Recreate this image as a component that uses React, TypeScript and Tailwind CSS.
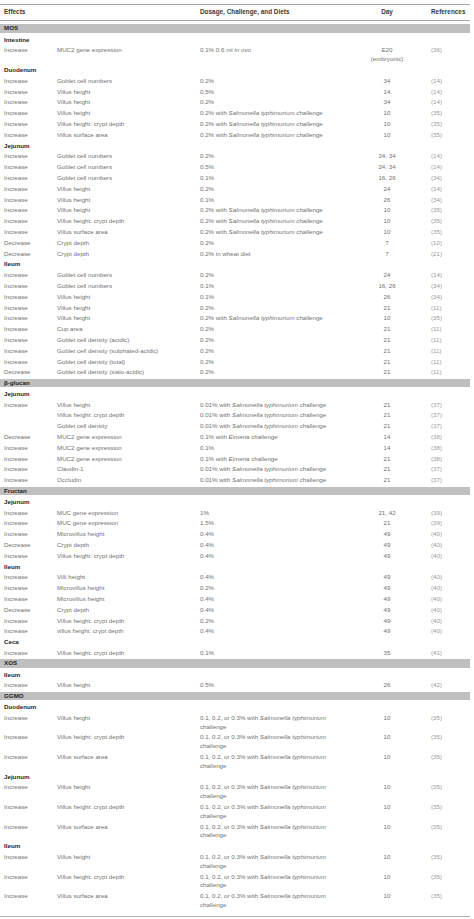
import type { ReactNode } from "react";

type Row = { e?: string; m: string; d: ReactNode; day: ReactNode; r: string; two?: boolean };
type Item = { band: string } | { label: string } | Row;

const sal = (pre: string) => (
    <>
        {pre} with <i>Salmonella typhimurium</i> challenge
    </>
);
const eim = (
    <>
        0.1% with <i>Eimeria</i> challenge
    </>
);
const gg = (
    <>
        0.1, 0.2, or 0.3% with <i>Salmonella typhimurium</i>
        <br />
        challenge
    </>
);

const ggmoRows: Row[] = [
    { e: "Increase", m: "Villus height", d: gg, day: "10", r: "(35)", two: true },
    { e: "Increase", m: "Villus height: crypt depth", d: gg, day: "10", r: "(35)", two: true },
    { e: "Increase", m: "Villus surface area", d: gg, day: "10", r: "(35)", two: true },
];

const items: Item[] = [
    { band: "MOS" },
    { label: "Intestine" },
    {
        e: "Increase",
        m: "MUC2 gene expression",
        d: (
            <>
                0.1% 0.6 ml <i>in ovo</i>
            </>
        ),
        day: (
            <>
                E20
                <br />
                (embryonic)
            </>
        ),
        r: "(36)",
        two: true,
    },
    { label: "Duodenum" },
    { e: "Increase", m: "Goblet cell numbers", d: "0.2%", day: "34", r: "(14)" },
    { e: "Increase", m: "Villus height", d: "0.5%", day: "14", r: "(14)" },
    { e: "Increase", m: "Villus height", d: "0.2%", day: "34", r: "(14)" },
    { e: "Increase", m: "Villus height", d: sal("0.2%"), day: "10", r: "(35)" },
    { e: "Increase", m: "Villus height: crypt depth", d: sal("0.2%"), day: "10", r: "(35)" },
    { e: "Increase", m: "Villus surface area", d: sal("0.2%"), day: "10", r: "(35)" },
    { label: "Jejunum" },
    { e: "Increase", m: "Goblet cell numbers", d: "0.2%", day: "24, 34", r: "(14)" },
    { e: "Increase", m: "Goblet cell numbers", d: "0.5%", day: "24, 34", r: "(14)" },
    { e: "Increase", m: "Goblet cell numbers", d: "0.1%", day: "16, 26", r: "(34)" },
    { e: "Increase", m: "Villus height", d: "0.2%", day: "24", r: "(14)" },
    { e: "Increase", m: "Villus height", d: "0.1%", day: "26", r: "(34)" },
    { e: "Increase", m: "Villus height", d: sal("0.2%"), day: "10", r: "(35)" },
    { e: "Increase", m: "Villus height: crypt depth", d: sal("0.2%"), day: "10", r: "(35)" },
    { e: "Increase", m: "Villus surface area", d: sal("0.2%"), day: "10", r: "(35)" },
    { e: "Decrease", m: "Crypt depth", d: "0.2%", day: "7", r: "(10)" },
    { e: "Decrease", m: "Crypt depth", d: "0.2% in wheat diet", day: "7", r: "(21)" },
    { label: "Ileum" },
    { e: "Increase", m: "Goblet cell numbers", d: "0.2%", day: "24", r: "(14)" },
    { e: "Increase", m: "Goblet cell numbers", d: "0.1%", day: "16, 26", r: "(34)" },
    { e: "Increase", m: "Villus height", d: "0.1%", day: "26", r: "(34)" },
    { e: "Increase", m: "Villus height", d: "0.2%", day: "21", r: "(11)" },
    { e: "Increase", m: "Villus height", d: sal("0.2%"), day: "10", r: "(35)" },
    { e: "Increase", m: "Cup area", d: "0.2%", day: "21", r: "(11)" },
    { e: "Increase", m: "Goblet cell density (acidic)", d: "0.2%", day: "21", r: "(11)" },
    { e: "Increase", m: "Goblet cell density (sulphated-acidic)", d: "0.2%", day: "21", r: "(11)" },
    { e: "Increase", m: "Goblet cell density (total)", d: "0.2%", day: "21", r: "(11)" },
    { e: "Decrease", m: "Goblet cell density (sialo-acidic)", d: "0.2%", day: "21", r: "(11)" },
    { band: "β-glucan" },
    { label: "Jejunum" },
    { e: "Increase", m: "Villus height", d: sal("0.01%"), day: "21", r: "(37)" },
    { m: "Villus height: crypt depth", d: sal("0.01%"), day: "21", r: "(37)" },
    { m: "Goblet cell density", d: sal("0.01%"), day: "21", r: "(37)" },
    { e: "Decrease", m: "MUC2 gene expression", d: eim, day: "14", r: "(38)" },
    { e: "Increase", m: "MUC2 gene expression", d: "0.1%", day: "14", r: "(38)" },
    { e: "Increase", m: "MUC2 gene expression", d: eim, day: "21", r: "(38)" },
    { e: "Increase", m: "Claudin-1", d: sal("0.01%"), day: "21", r: "(37)" },
    { e: "Increase", m: "Occludin", d: sal("0.01%"), day: "21", r: "(37)" },
    { band: "Fructan" },
    { label: "Jejunum" },
    { e: "Increase", m: "MUC gene expression", d: "1%", day: "21, 42", r: "(39)" },
    { e: "Increase", m: "MUC gene expression", d: "1.5%", day: "21", r: "(39)" },
    { e: "Increase", m: "Microvillus height", d: "0.4%", day: "49", r: "(40)" },
    { e: "Decrease", m: "Crypt depth", d: "0.4%", day: "49", r: "(40)" },
    { e: "Increase", m: "Villus height: crypt depth", d: "0.4%", day: "49", r: "(40)" },
    { label: "Ileum" },
    { e: "Increase", m: "Villi height", d: "0.4%", day: "49", r: "(40)" },
    { e: "Increase", m: "Microvillus height", d: "0.2%", day: "49", r: "(40)" },
    { e: "Increase", m: "Microvillus height", d: "0.4%", day: "49", r: "(40)" },
    { e: "Decrease", m: "Crypt depth", d: "0.4%", day: "49", r: "(40)" },
    { e: "Increase", m: "Villus height: crypt depth", d: "0.2%", day: "49", r: "(40)" },
    { e: "Increase", m: "villus height: crypt depth", d: "0.4%", day: "49", r: "(40)" },
    { label: "Ceca" },
    { e: "Increase", m: "Villus height: crypt depth", d: "0.1%", day: "35", r: "(41)" },
    { band: "XOS" },
    { label: "Ileum" },
    { e: "Increase", m: "Villus height", d: "0.5%", day: "26", r: "(42)" },
    { band: "GGMO" },
    { label: "Duodenum" },
    ...ggmoRows,
    { label: "Jejunum" },
    ...ggmoRows,
    { label: "Ileum" },
    ...ggmoRows,
];

function Cells({ a, b, c, d, e }: { a: ReactNode; b: ReactNode; c: ReactNode; d: ReactNode; e: ReactNode }) {
    return (
        <>
            <div className="w-[53px] shrink-0">{a}</div>
            <div className="w-[143px] shrink-0">{b}</div>
            <div className="w-[155px] shrink-0">{c}</div>
            <div className="w-[64px] shrink-0 text-center">{d}</div>
            <div className="ml-[12px]">{e}</div>
        </>
    );
}

export default function App() {
    return (
        <div className="min-h-screen bg-white pt-[3.5px] font-['Liberation_Sans',Arial,sans-serif] text-[6.2px] leading-[8.8px]">
            <div className="w-[470px]">
                {/* cabecera */}
                <div className="flex h-[17px] items-center border-y border-[#a8a8a8] pl-[4px] text-[6.4px] font-bold text-[#3a3a3a]">
                    <Cells a="Effects" b="" c="Dosage, Challenge, and Diets" d="Day" e="References" />
                </div>

                <div className="mt-[3.3px]">
                    {items.map((it, i) => {
                        if ("band" in it) {
                            return (
                                <div key={i} className="h-[10.8px] pt-[0.5px]">
                                    <div className="flex h-[8.7px] items-center bg-[#bfbfbf] pl-[4px] font-bold text-[#222]">
                                        {it.band}
                                    </div>
                                </div>
                            );
                        }
                        if ("label" in it) {
                            return (
                                <div key={i} className="py-[1px] pl-[4px] font-bold text-[#262626]">
                                    {it.label}
                                </div>
                            );
                        }
                        return (
                            <div key={i} className="flex py-[1px] pl-[4px] text-[#727272]">
                                <Cells
                                    a={it.e ?? ""}
                                    b={it.m}
                                    c={it.d}
                                    d={it.day}
                                    e={<span className="text-[#9a9a9a]">{it.r}</span>}
                                />
                            </div>
                        );
                    })}
                </div>

                <div className="mt-[5.5px] border-t border-[#b0b0b0]" />
            </div>
        </div>
    );
}
